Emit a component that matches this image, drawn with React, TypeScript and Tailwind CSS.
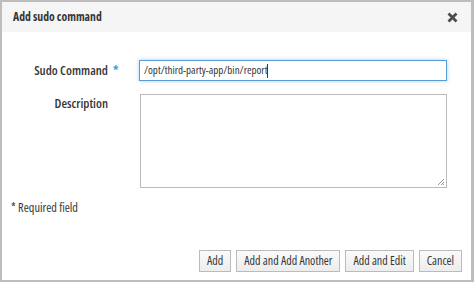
export default function App() {
  const btn =
    "h-[22px] px-[7px] border border-[#bbbbbb] bg-gradient-to-b from-[#fafafa] to-[#ededed] text-[#363636]";
  return (
    <div
      className="w-[474px] h-[282px] bg-[#bdbdbd] pt-[2px] pl-[2px] pr-[3px] pb-[2px] font-stretch-condensed"
      style={{ fontFamily: '"Open Sans", "Liberation Sans", sans-serif' }}
    >
      <div className="flex flex-col h-full bg-white text-[#363636]">
        {/* Header */}
        <div className="flex items-center justify-between h-[30px] bg-[#f5f5f5] pl-[11px] pr-[13px]">
          <span className="text-[11.7px] font-bold text-[#363636]">Add sudo command</span>
          <svg width="11" height="11" viewBox="0 0 11 11">
            <path d="M1.5 1.5 L9.5 9.5 M9.5 1.5 L1.5 9.5" stroke="#4d4d4d" strokeWidth="2.8" />
          </svg>
        </div>

        {/* Form */}
        <div className="flex flex-col pt-[28px] text-[12px]">
          <div className="flex items-center">
            <label className="w-[106px] text-right text-[12.8px] font-semibold text-[#363636]">Sudo Command</label>
            <span className="w-[31px] pl-[5px] text-[#39a5dc] font-bold">*</span>
            <div className="w-[308px] h-[21px] border border-[#5b9bd1] shadow-[0_0_4px_rgba(102,175,233,0.6)] flex items-center pl-[4px] text-[11px] text-[#363636]">
              /opt/third-party-app/bin/report
              <span className="w-px h-[14px] bg-[#363636]"></span>
            </div>
          </div>
          <div className="flex items-start mt-[13px]">
            <label className="w-[106px] text-right text-[12.8px] font-semibold text-[#363636]">Description</label>
            <span className="w-[32px]"></span>
            <div className="relative w-[307px] h-[94px] border border-[#bbbbbb]">
              <svg className="absolute right-[1px] bottom-[1px]" width="8" height="8" viewBox="0 0 8 8">
                <path d="M7 1 L1 7 M7 4 L4 7 M7 6 L6 7" stroke="#999" strokeWidth="1" />
              </svg>
            </div>
          </div>
          <div className="pl-[9px] mt-[11px] text-[12.3px] text-[#363636]">* Required field</div>
        </div>

        {/* Footer */}
        <div className="mt-auto flex justify-end gap-[5px] pr-[9px] pb-[8px] text-[12px]">
          <button className={btn}>Add</button>
          <button className={btn}>Add and Add Another</button>
          <button className={btn}>Add and Edit</button>
          <button className={btn}>Cancel</button>
        </div>
      </div>
    </div>
  );
}
